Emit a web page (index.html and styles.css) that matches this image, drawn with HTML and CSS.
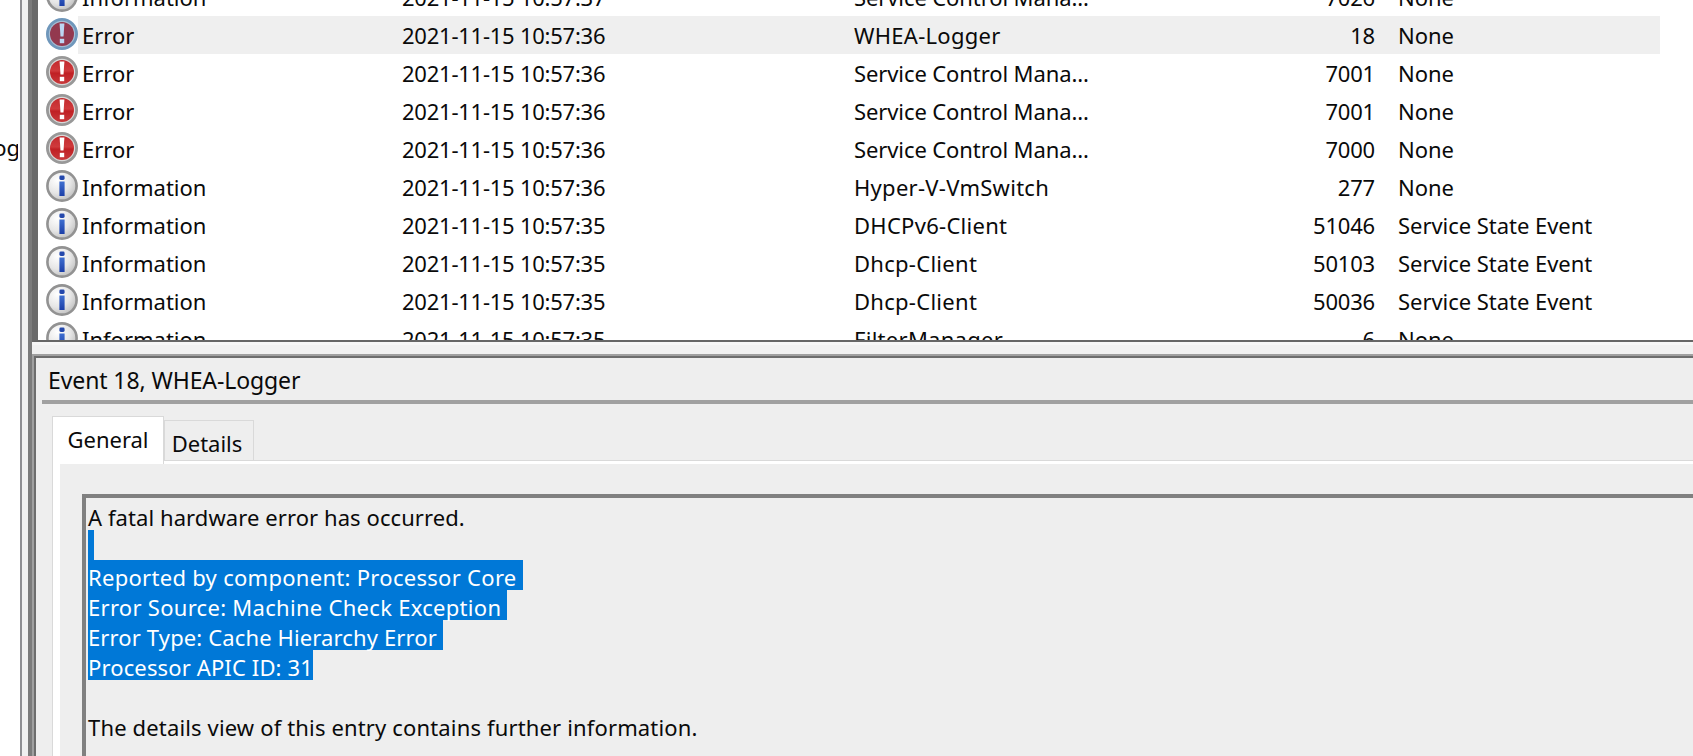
FILE: index.html
```html
<!DOCTYPE html>
<html lang="en">
<head>
<meta charset="utf-8">
<title>Event Viewer</title>
<link rel="stylesheet" href="styles.css">
</head>
<body>
<svg class="defs" width="0" height="0" aria-hidden="true">
  <defs>
    <radialGradient id="gi" cx="35%" cy="30%" r="80%"><stop offset="0" stop-color="#ffffff"/><stop offset=".55" stop-color="#e6e6e6"/><stop offset="1" stop-color="#b9b9b9"/></radialGradient>
    <linearGradient id="gr" x1="0" y1="0" x2="0" y2="1"><stop offset="0" stop-color="#c22a2e"/><stop offset=".45" stop-color="#cf3a3c"/><stop offset=".55" stop-color="#c02024"/><stop offset="1" stop-color="#c8393b"/></linearGradient>
    <linearGradient id="gb" x1="0" y1="0" x2="0" y2="1"><stop offset="0" stop-color="#3f6fd0"/><stop offset="1" stop-color="#1c3fa8"/></linearGradient>
    <symbol id="i-info" viewBox="0 0 32 32">
      <circle cx="16" cy="16" r="14.6" fill="url(#gi)" stroke="#929292" stroke-width="2.6"/>
      <rect x="13.4" y="5.5" width="5.2" height="4.4" rx="1.4" fill="#2448ac"/>
      <rect x="13.4" y="11.5" width="5.2" height="14.5" fill="url(#gb)"/>
    </symbol>
    <symbol id="i-err" viewBox="0 0 32 32">
      <circle cx="16" cy="16" r="14.6" fill="#d9d9d9" stroke="#989898" stroke-width="2.8"/>
      <circle cx="16" cy="16" r="12" fill="url(#gr)"/>
      <path d="M13.6 5.6h4.8l-.9 13h-3z" fill="#fff"/>
      <rect x="13.8" y="20.8" width="4.4" height="4.4" fill="#fff"/>
    </symbol>
    <symbol id="i-err-sel" viewBox="0 0 32 32">
      <circle cx="16" cy="16" r="14.6" fill="#a6bdd3" stroke="#6f97bb" stroke-width="2.8"/>
      <circle cx="16" cy="16" r="12" fill="#93394f"/>
      <path d="M13.6 5.6h4.8l-.9 13h-3z" fill="#bcd6f2"/>
      <rect x="13.8" y="20.8" width="4.4" height="4.4" fill="#bcd6f2"/>
    </symbol>
  </defs>
</svg>
<div class="app">
  <aside class="tree"><div class="tree-clip"><span class="tree-label">Log</span></div></aside>
  <div class="sash"></div>
  <main class="main">
    <section class="list">
      <div class="rows">
        <div class="row"><svg class="ico"><use href="#i-info"/></svg><div class="cells"><span>Information</span><span class="date">2021-11-15 10:57:37</span><span class="svc">Service Control Mana...</span><span class="num">7026</span><span class="task">None</span></div></div>
        <div class="row"><svg class="ico"><use href="#i-err-sel"/></svg><div class="cells sel-row"><span>Error</span><span class="date">2021-11-15 10:57:36</span><span class="src">WHEA-Logger</span><span class="num">18</span><span class="task">None</span></div></div>
        <div class="row"><svg class="ico"><use href="#i-err"/></svg><div class="cells"><span>Error</span><span class="date">2021-11-15 10:57:36</span><span class="svc">Service Control Mana...</span><span class="num">7001</span><span class="task">None</span></div></div>
        <div class="row"><svg class="ico"><use href="#i-err"/></svg><div class="cells"><span>Error</span><span class="date">2021-11-15 10:57:36</span><span class="svc">Service Control Mana...</span><span class="num">7001</span><span class="task">None</span></div></div>
        <div class="row"><svg class="ico"><use href="#i-err"/></svg><div class="cells"><span>Error</span><span class="date">2021-11-15 10:57:36</span><span class="svc">Service Control Mana...</span><span class="num">7000</span><span class="task">None</span></div></div>
        <div class="row"><svg class="ico"><use href="#i-info"/></svg><div class="cells"><span>Information</span><span class="date">2021-11-15 10:57:36</span><span class="src">Hyper-V-VmSwitch</span><span class="num">277</span><span class="task">None</span></div></div>
        <div class="row"><svg class="ico"><use href="#i-info"/></svg><div class="cells"><span>Information</span><span class="date">2021-11-15 10:57:35</span><span class="src">DHCPv6-Client</span><span class="num">51046</span><span class="task">Service State Event</span></div></div>
        <div class="row"><svg class="ico"><use href="#i-info"/></svg><div class="cells"><span>Information</span><span class="date">2021-11-15 10:57:35</span><span class="src">Dhcp-Client</span><span class="num">50103</span><span class="task">Service State Event</span></div></div>
        <div class="row"><svg class="ico"><use href="#i-info"/></svg><div class="cells"><span>Information</span><span class="date">2021-11-15 10:57:35</span><span class="src">Dhcp-Client</span><span class="num">50036</span><span class="task">Service State Event</span></div></div>
        <div class="row"><svg class="ico"><use href="#i-info"/></svg><div class="cells"><span>Information</span><span class="date">2021-11-15 10:57:35</span><span class="src">FilterManager</span><span class="num">6</span><span class="task">None</span></div></div>
      </div>
    </section>
    <div class="hsash"></div>
    <section class="detail">
      <div class="detail-inner">
        <header class="detail-head">Event 18, WHEA-Logger</header>
        <div class="head-rule"></div>
        <nav class="tabs">
          <div class="tab tab-on">General</div>
          <div class="tab">Details</div>
        </nav>
        <div class="panel">
          <div class="msg">
            <div class="line">A fatal hardware error has occurred.</div>
            <div class="line sel sel-empty"></div>
            <div class="line sel">Reported by component: Processor Core </div>
            <div class="line sel">Error Source: Machine Check Exception </div>
            <div class="line sel sel-tight">Error Type: Cache Hierarchy Error </div>
            <div class="line sel sel-tight">Processor APIC ID: 31</div>
            <div class="line"></div>
            <div class="line line-wide">The details view of this entry contains further information.</div>
          </div>
        </div>
      </div>
    </section>
  </main>
</div>
</body>
</html>
```

FILE: styles.css
```css
* { box-sizing: border-box; }
html, body { margin: 0; height: 100%; overflow: hidden; background: #fff; }
body { font-family: "Noto Sans", "Open Sans", sans-serif; font-size: 22px; color: #0a0a0a; }
.defs { position: absolute; }

.app { display: flex; width: 1693px; height: 756px; overflow: hidden; }

.tree { flex: 0 0 20px; background: #fff; padding-top: 132px; }
.tree-clip { width: 18px; overflow: hidden; display: flex; justify-content: flex-end; line-height: 30px; }
.tree-label { flex: none; margin-right: -2px; }

.sash { flex: 0 0 8px; background: #f0f0f0; border-left: 2px solid #8e8e92; }

.main { flex: 1; min-width: 0; display: flex; flex-direction: column; border-left: 4px solid #7b7b7b; }

.list { flex: 0 0 342px; overflow: hidden; background: #fff; border-left: 6px solid #6a6a6a; border-bottom: 2px solid #666; }
.rows { margin-top: -22px; }
.row { display: flex; height: 38px; padding-left: 8px; }
.ico { flex: none; width: 32px; height: 32px; margin-top: 2px; }
.cells { width: 1582px; display: grid; grid-template-columns: 320px 452px 400px 121px 1fr; padding-left: 4px; line-height: 38px; white-space: nowrap; }
.date { letter-spacing: -0.24px; }
.svc { letter-spacing: -0.1px; }
.src { letter-spacing: 0.28px; }
.num { text-align: right; letter-spacing: -0.2px; }
.task { padding-left: 23px; letter-spacing: -0.04px; }
.sel-row { background: #efefef; }

.hsash { flex: 0 0 12px; background: #f1f1f1; border-top: 3px solid #f6f6f6; }

.detail { flex: 1; min-height: 0; border-top: 2px solid #a0a0a0; border-left: 2px solid #a0a0a0; }
.detail-inner { height: 100%; background: #eee; border-top: 2px solid #6d6d6d; border-left: 2px solid #6d6d6d; padding-left: 6px; }
.detail-head { height: 42px; line-height: 44px; padding-left: 6px; font-size: 23px; letter-spacing: -0.1px; }
.head-rule { height: 4px; background: #a0a0a0; }

.tabs { display: flex; align-items: flex-end; height: 56px; margin-left: 10px; }
.tab { height: 40px; width: 90px; line-height: 44px; text-align: center; border: 1px solid #d9d9d9; border-bottom: 0; background: #eee; padding-right: 4px; }
.tab-on { width: 112px; height: 48px; line-height: 44px; margin-bottom: -4px; background: #fff; padding-right: 0; position: relative; z-index: 1; }

.panel { margin-left: 10px; border-top: 1px solid #d9d9d9; border-left: 1px solid #d9d9d9; height: 300px; background: #eee; box-shadow: inset 7px 3px 0 #fff; padding: 33px 0 0 29px; }
.msg { border: 4px solid #808080; border-right: 0; padding: 2px 0 0 2px; height: 300px; }
.line { height: 30px; line-height: 34px; white-space: pre; letter-spacing: 0.08px; width: fit-content; }
.line-wide { letter-spacing: 0.15px; }
.sel { background: #0078d7; color: #fff; letter-spacing: 0.29px; }
.sel-tight { letter-spacing: 0.13px; }
.sel-empty { width: 6px; }
```
